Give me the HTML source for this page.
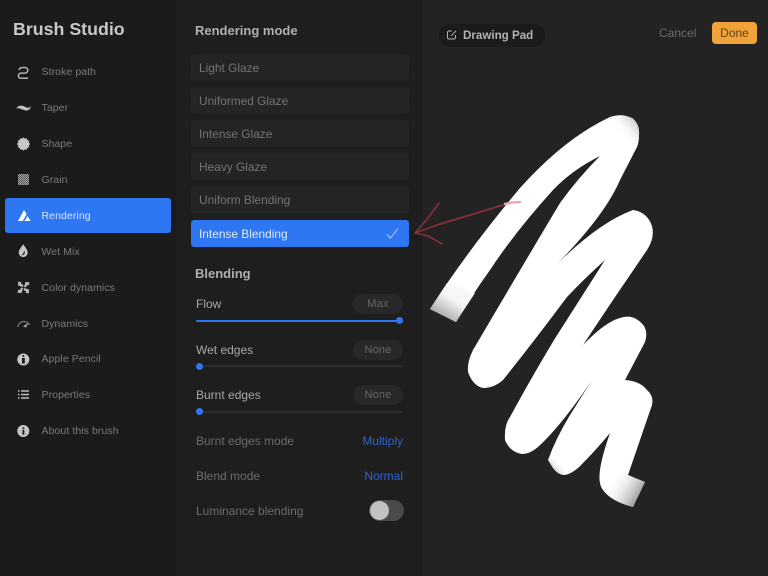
<!DOCTYPE html>
<html><head><meta charset="utf-8"><style>
html,body{margin:0;padding:0;background:#232323}
body{width:768px;height:576px;position:relative;overflow:hidden;font-family:"Liberation Sans",sans-serif}
#w{position:absolute;left:0;top:0;width:768px;height:576px;background:#232323;filter:blur(.3px)}
.a{position:absolute;white-space:nowrap}
#side{left:0;top:0;width:176px;height:576px;background:#1b1b1b}
#mid{left:176px;top:0;width:246px;height:576px;background:#1e1e1e}
.n{left:41.5px;font-size:10.5px;line-height:14px;color:#7a7a7a;letter-spacing:.08px}
.r{left:191px;width:218px;height:27px;background:#242424;border-radius:3px}
.t{left:199px;font-size:11.9px;line-height:16px;color:#747474}
.l{left:196px;font-size:12px;line-height:16px;color:#a8a8a8}
.l2{left:196px;font-size:12px;line-height:16px;color:#6c6c6c}
.p{left:353px;width:50px;height:20px;border-radius:10px;background:#282828;color:#666;font-size:11px;line-height:20px;text-align:center;letter-spacing:.2px}
.tr{left:196px;width:207px;height:2px;background:#2d2d2d;border-radius:1px}
.d{width:7px;height:7px;border-radius:50%;background:#2f76f2}
.b{font-size:13px;font-weight:bold;color:#afafaf;left:195px;line-height:18px}
.v{right:365px;font-size:12px;line-height:16px;color:#2c63ca}
svg.a{overflow:visible}
</style></head><body><div id="w">
<div class="a" id="side"></div><div class="a" id="mid"></div>
<div class="a" style="left:13px;top:18px;font-size:17.8px;line-height:22px;font-weight:bold;color:#c8c8c8">Brush Studio</div>
<div class="a" style="left:5px;top:198px;width:166px;height:35px;background:#2f76f2;border-radius:3px"></div>

<svg class="a" style="left:0;top:0" width="176" height="450" fill="none" stroke="#b4b4b4">
<defs><pattern id="ck" patternUnits="userSpaceOnUse" x="18" y="174" width="2" height="2"><rect width="2" height="2" fill="#a6a6a6" stroke="none"/><rect width="1" height="1" fill="#555" stroke="none"/><rect x="1" y="1" width="1" height="1" fill="#555" stroke="none"/></pattern></defs>
<path d="M19 70Q19.500 67.500 23 67.500H25a2.800 2.800 0 0 1 0 5.600H21a2.600 2.600 0 0 0 0 5.200H28" stroke-width="1.500"/>
<path d="M16 109c2-4 5.500-4 8.500-2.500s4.500 1.800 6.500-.3c-1 4.500-4.500 5-8 3.600s-5-2.300-7-.8z" fill="#c0c0c0" stroke="none"/>
<path d="M30.300 144L28.700 145.400 29.400 147.400 27.300 147.800 26.900 149.900 24.900 149.200 23.500 150.800 22.100 149.200 20.100 149.900 19.700 147.800 17.600 147.400 18.300 145.400 16.700 144 18.300 142.600 17.600 140.600 19.700 140.200 20.100 138.100 22.100 138.800 23.500 137.200 24.900 138.800 26.900 138.100 27.300 140.200 29.400 140.600 28.700 142.600Z" fill="#c8c8c8" stroke="none"/>
<rect x="18" y="174" width="11" height="11" fill="url(#ck)" stroke="none"/>
<path d="M18 221l6-11 2.600 4.300-3.900 6.700zM24.500 221l3.100-5 2.900 5z" fill="#fff" stroke="none"/>
<path d="M23.200 244.300c-2.400 3.300-4.500 5.900-4.500 8.300a4.500 4.500 0 0 0 9 0c0-2.400-2.100-5-4.500-8.300z" fill="#c4c4c4" stroke="none"/>
<path d="M24 250.500c1.400 2.400.9 4.800-2.600 4.700 1.500-.8 2.600-2.400 2.600-4.700z" fill="#1b1b1b" stroke="none"/>
<g fill="#bababa" stroke="none">
<path d="M23 287l-5-1.500.2-4 3.300.8-.6 1.500 2.600 1.200z"/>
<path d="M24 287l1.500-5 4 .2-.8 3.300-1.500-.6-1.200 2.600z"/>
<path d="M24 288l5 1.500-.2 4-3.300-.8.600-1.500-2.600-1.200z"/>
<path d="M23 288l-1.500 5-4-.2.800-3.300 1.500.6 1.200-2.600z"/>
</g>
<path d="M17.800 327A6.200 6.200 0 0 1 29.500 325" stroke="#8a8a8a" stroke-width="1"/>
<path d="M23 326.500L28.500 322.500L26 327.500Z" fill="#aaa" stroke="none"/>
<circle cx="23.300" cy="359.500" r="6" fill="#c6c6c6" stroke="none"/>
<rect x="22" y="358" width="2.800" height="5.500" fill="#1b1b1b" stroke="none"/><rect x="22.600" y="355" width="1.600" height="2" fill="#1b1b1b" stroke="none"/>
<path d="M18 391h1.500M18 394.500h1.500M18 398h1.500M21 391h8M21 394.500h8M21 398h8" stroke="#bdbdbd" stroke-width="1.500"/>
<circle cx="23.300" cy="431" r="6" fill="#c6c6c6" stroke="none"/>
<rect x="22.500" y="429.800" width="1.800" height="4.800" fill="#1b1b1b" stroke="none"/><rect x="22.500" y="427.300" width="1.800" height="1.600" fill="#1b1b1b" stroke="none"/>
</svg>

<div class="a n" style="top:65px">Stroke path</div>
<div class="a n" style="top:101px">Taper</div>
<div class="a n" style="top:137px">Shape</div>
<div class="a n" style="top:173px">Grain</div>
<div class="a n" style="top:209px;color:#d8e5fb">Rendering</div>
<div class="a n" style="top:245px">Wet Mix</div>
<div class="a n" style="top:281px">Color dynamics</div>
<div class="a n" style="top:317px">Dynamics</div>
<div class="a n" style="top:352px">Apple Pencil</div>
<div class="a n" style="top:388px">Properties</div>
<div class="a n" style="top:424px">About this brush</div>

<div class="a b" style="top:22px">Rendering mode</div>
<div class="a r" style="top:54px"></div><div class="a r" style="top:87px"></div><div class="a r" style="top:120px"></div><div class="a r" style="top:153px"></div><div class="a r" style="top:186px"></div>
<div class="a r" style="top:220px;background:#2f76f2;height:27px"></div>
<div class="a t" style="top:60px">Light Glaze</div>
<div class="a t" style="top:93px">Uniformed Glaze</div>
<div class="a t" style="top:126px">Intense Glaze</div>
<div class="a t" style="top:159px">Heavy Glaze</div>
<div class="a t" style="top:192px">Uniform Blending</div>
<div class="a t" style="top:226px;color:#dfe9fb">Intense Blending</div>
<svg class="a" style="left:386px;top:227px" width="14" height="13" fill="none"><path d="M1 7.500l3.500 3.500L12 1.500" stroke="#b9cff5" stroke-width="1"/></svg>

<div class="a b" style="top:265px">Blending</div>
<div class="a l" style="top:296px">Flow</div><div class="a p" style="top:294px">Max</div>
<div class="a tr" style="top:319.500px;background:#2f76f2"></div><div class="a d" style="left:396px;top:317px"></div>
<div class="a l" style="top:342px">Wet edges</div><div class="a p" style="top:340px">None</div>
<div class="a tr" style="top:365px"></div><div class="a d" style="left:196px;top:362.500px"></div>
<div class="a l" style="top:387px">Burnt edges</div><div class="a p" style="top:385px">None</div>
<div class="a tr" style="top:410.500px"></div><div class="a d" style="left:196px;top:408px"></div>
<div class="a l2" style="top:433px">Burnt edges mode</div><div class="a v" style="top:433px">Multiply</div>
<div class="a l2" style="top:468px">Blend mode</div><div class="a v" style="top:468px">Normal</div>
<div class="a l2" style="top:503px">Luminance blending</div>
<div class="a" style="left:369px;top:500px;width:35px;height:21px;border-radius:11px;background:#4a4a4a"></div>
<div class="a" style="left:370px;top:501px;width:19px;height:19px;border-radius:50%;background:#c2c2c2"></div>

<div class="a" style="left:439px;top:24px;width:106px;height:23px;border-radius:12px;background:#1b1b1b"></div>
<svg class="a" style="left:446px;top:29px" width="12" height="12" fill="none" stroke="#b0b0b0" stroke-width="1"><path d="M6 2H3a1.500 1.500 0 0 0-1.500 1.500v5A1.500 1.500 0 0 0 3 10h5a1.500 1.500 0 0 0 1.500-1.500V6M5 7l5-5.200"/></svg>
<div class="a" style="left:463px;top:27.500px;font-size:11.600px;line-height:16px;font-weight:bold;color:#b2b2b2">Drawing Pad</div>
<div class="a" style="left:659px;top:25px;font-size:12px;line-height:16px;color:#6b6b6b">Cancel</div>
<div class="a" style="left:712px;top:22px;width:45px;height:22px;border-radius:4px;background:#f0a33a;color:#5e4015;font-size:12px;line-height:22px;text-align:center">Done</div>

<svg class="a" style="left:0;top:0" width="768" height="576">
<defs>
<linearGradient id="g1" gradientUnits="userSpaceOnUse" x1="438" y1="320" x2="452" y2="298"><stop offset="0" stop-color="#9a9a9a"/><stop offset="1" stop-color="#f7f7f7"/></linearGradient>
<linearGradient id="g2" gradientUnits="userSpaceOnUse" x1="640" y1="122" x2="622" y2="136"><stop offset="0" stop-color="#bdbdbd"/><stop offset="1" stop-color="#fff" stop-opacity="0"/></linearGradient>
<linearGradient id="g3" gradientUnits="userSpaceOnUse" x1="642" y1="496" x2="612" y2="478"><stop offset="0" stop-color="#8f8f8f"/><stop offset="1" stop-color="#fff" stop-opacity="0"/></linearGradient>
<linearGradient id="g4" gradientUnits="userSpaceOnUse" x1="549" y1="472" x2="560" y2="462"><stop offset="0" stop-color="#999"/><stop offset="1" stop-color="#fff" stop-opacity="0"/></linearGradient>
</defs>
<path fill="#fff" d="M430 309Q468 250 520 188Q565 138 610 117Q622 113 632 118Q640 124 639 135Q639 142 637 147L620 180Q605 215 558 263Q600 222 633 210Q647 212 652 226Q655 238 647 250L613 300L583 345Q605 322 620 318Q634 313 644 326Q648 333 645 342L625 380Q640 381 647 390Q654 396 652 405L628 475L645 482L633 507Q618 503 610 497Q601 490 600 483Q597 470 610 433Q596 450 583 463Q574 473 565 475Q558 475 553 468L548 460Q556 438 570 415L592 380Q562 425 538 447Q530 454 522 454Q510 452 505 440Q504 425 510 417Q530 380 554 340L605 260Q585 278 567 297Q535 340 503 380Q494 388 483 388Q473 386 468 372Q467 362 473 350Q520 270 560 203Q578 178 600 156Q572 170 553 190Q515 232 490 270Q472 295 456 322Z"/>
<path fill="url(#g1)" d="M430 309L447 283L475 293L456 322Z"/>
<path fill="url(#g2)" d="M610 117Q622 113 632 118Q640 124 639 135Q639 142 637 147L615 135Z"/>
<path fill="url(#g3)" d="M628 475L645 482L633 507Q618 503 610 497Q601 490 600 483L600 465Z"/>
<path fill="url(#g4)" d="M548 460L553 468Q558 475 565 475L568 472L558 455Z"/>
<g fill="none" stroke-linecap="round" stroke-linejoin="round">
<path d="M503 205L470 215L437 225L415 233" stroke="#84303c" stroke-width="1.700"/>
<path d="M505 204L512 202.500L520 202" stroke="#eba9b4" stroke-width="2.500"/>
<path d="M439 203L428 218L415 233L428 236L442 244" stroke="#84303c" stroke-width="1.600"/>
</g>
</svg>
</div></body></html>
